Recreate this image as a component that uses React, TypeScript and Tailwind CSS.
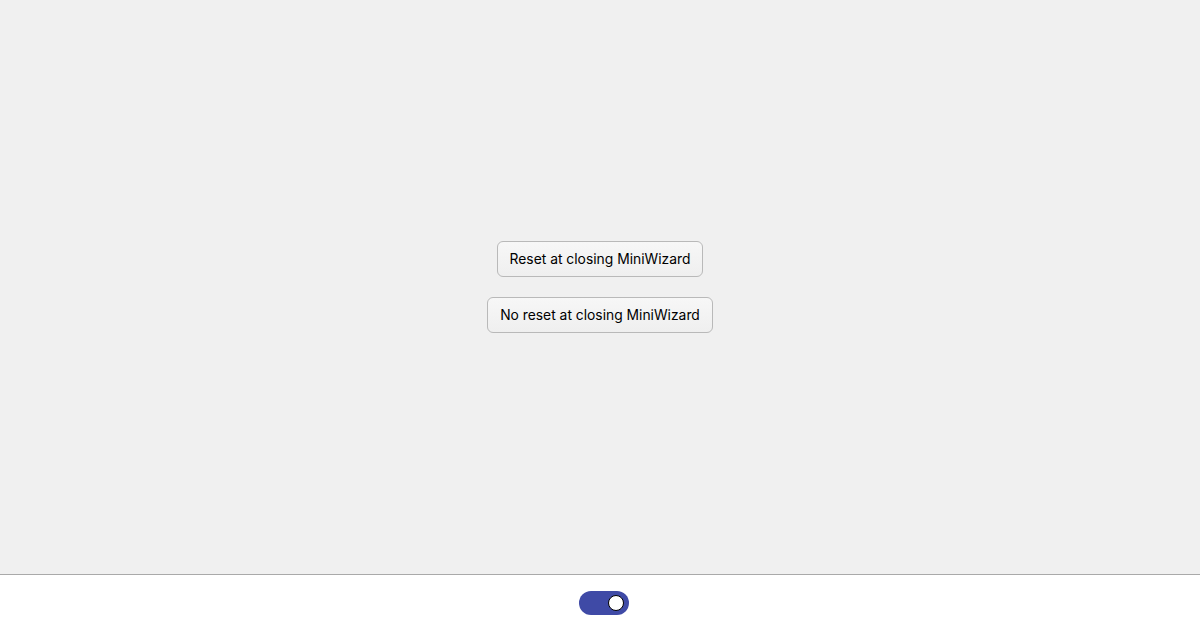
import React, { useState } from "react";

export default function App() {
  const [on, setOn] = useState(true);

  return (
    <div className="flex h-[630px] w-[1200px] flex-col bg-[#f0f0f0] font-['Inter',sans-serif] text-[13.85px] text-black">
      <div className="flex flex-1 flex-col items-center justify-center gap-5">
        <button className="h-9 rounded-md border border-[#b9b9b9] bg-gradient-to-b from-[#f7f7f7] to-[#efefef] px-3 pt-[2px] leading-none">
          Reset at closing MiniWizard
        </button>
        <button className="h-9 rounded-md border border-[#b9b9b9] bg-gradient-to-b from-[#f7f7f7] to-[#efefef] px-3 pt-[2px] leading-none">
          No reset at closing MiniWizard
        </button>
      </div>
      <div className="flex h-[56px] items-center justify-center border-t border-[#a9a9a9] bg-white">
        <button
          onClick={() => setOn(!on)}
          className="ml-2 flex h-6 w-[50px] items-center justify-end rounded-full bg-[#3f4aa6] px-[5px]"
        >
          <span className="h-4 w-4 rounded-full border-[1.5px] border-black bg-white" />
        </button>
      </div>
    </div>
  );
}
